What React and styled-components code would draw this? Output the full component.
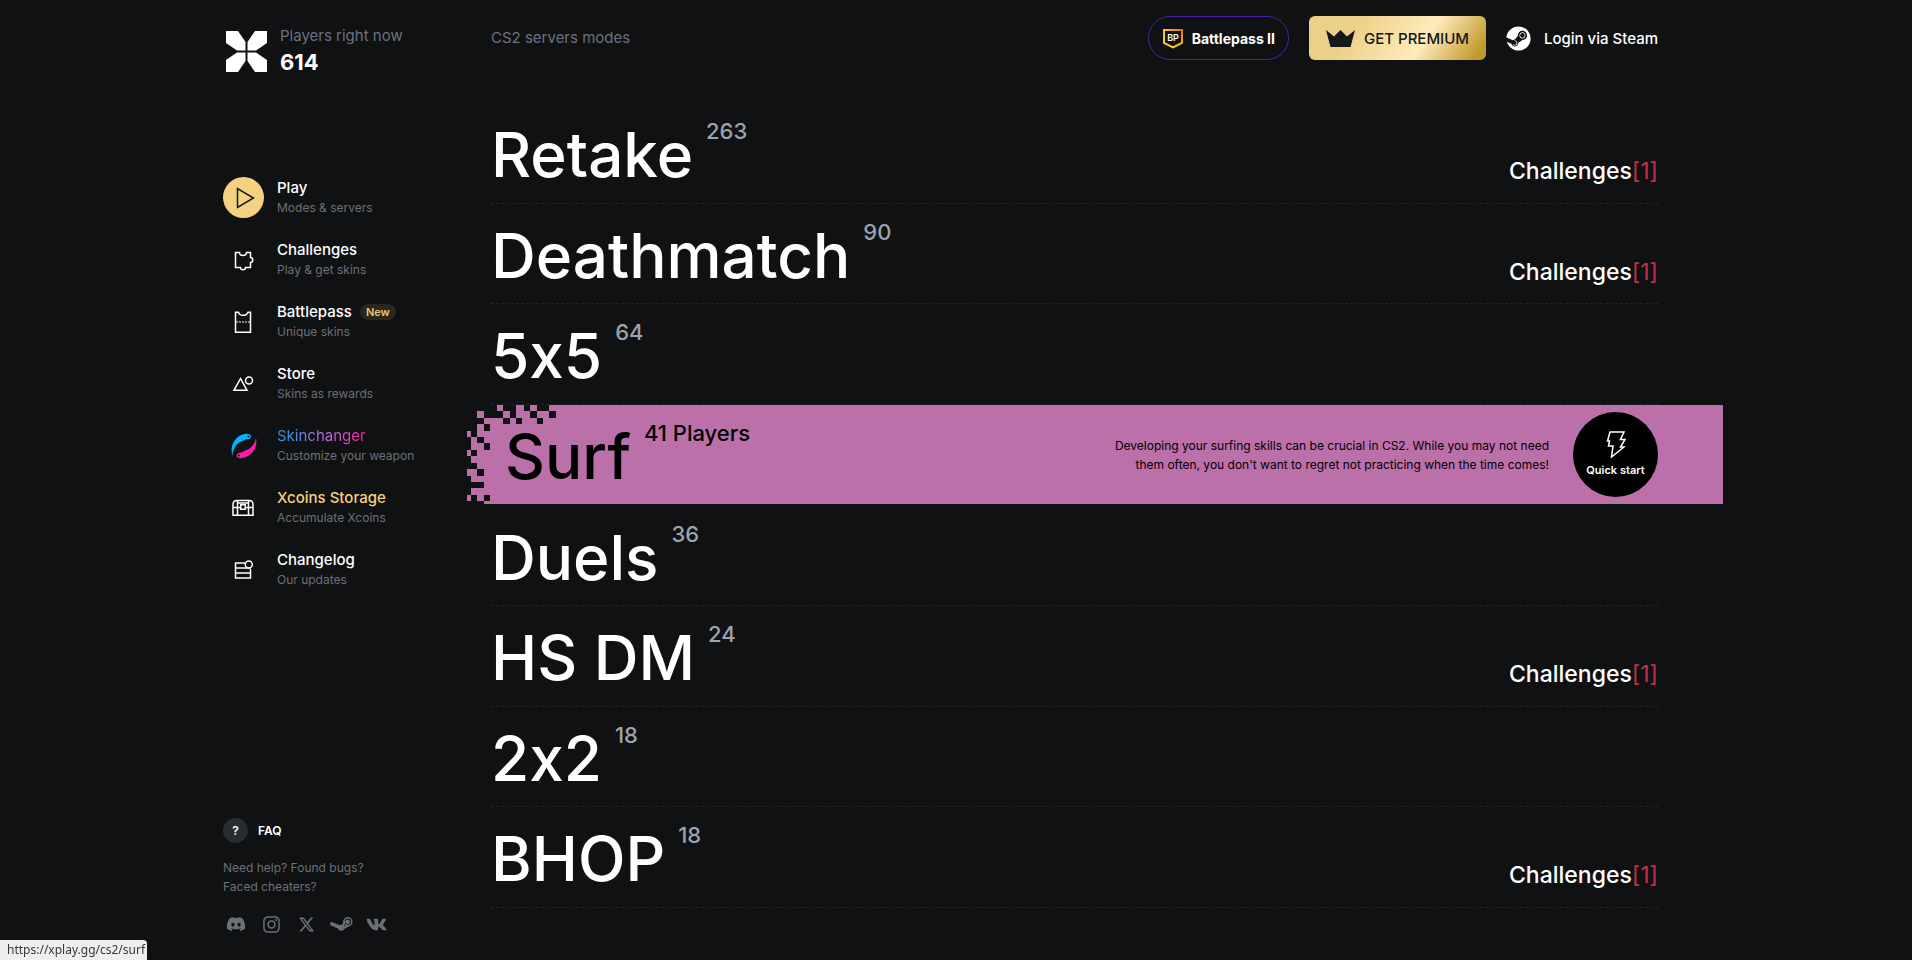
import React from "react";
import styled, { createGlobalStyle, css } from "styled-components";
import { FaDiscord, FaInstagram, FaXTwitter, FaSteam } from "react-icons/fa6";
import { FaVk } from "react-icons/fa";

const GlobalStyle = createGlobalStyle`
  *, *::before, *::after { box-sizing: border-box; }
  body {
    margin: 0;
    background: #101113;
    color: #fff;
    font-family: Inter, "Liberation Sans", sans-serif;
    font-variant-ligatures: no-contextual;
  }
  a { color: inherit; text-decoration: none; }
  h1, h2, p, ul { margin: 0; padding: 0; font-weight: inherit; }
  ul { list-style: none; }
  button { font: inherit; color: inherit; border: 0; padding: 0; cursor: pointer; }
`;

const Page = styled.div`
  display: flex;
  max-width: 1468px;
  min-height: 100vh;
  margin: 0 auto;
  padding: 0 32px 0 1px;
`;

const Sidebar = styled.aside`
  display: flex;
  flex-direction: column;
  flex: 0 0 268px;
  padding: 25px 0;
`;

const Brand = styled.a`
  display: flex;
  align-items: center;
  gap: 13px;
  padding-left: 3px;
`;

const Online = styled.div`
  font-size: 15px;
  line-height: 22px;
  color: #6b7280;
`;

const OnlineCount = styled.strong`
  display: block;
  font-size: 22px;
  line-height: 30px;
  font-weight: 700;
  color: #fff;
`;

const Nav = styled.nav`
  display: flex;
  flex-direction: column;
  gap: 21px;
  padding-top: 100px;
`;

const NavItem = styled.a`
  display: flex;
  gap: 13px;
`;

const NavIcon = styled.span`
  display: flex;
  align-items: center;
  justify-content: center;
  flex: none;
  width: 41px;
  height: 41px;
  border-radius: 50%;
  background: ${(p) => (p.$active ? "#f4d27f" : "transparent")};
`;

const NavText = styled.span`
  padding-top: 1px;
`;

const NavTitle = styled.span`
  display: flex;
  align-items: center;
  gap: 8px;
  font-size: 15px;
  line-height: 20px;
  font-weight: 500;
  color: ${(p) => (p.$tone === "gold" ? "#f4d27f" : "#fff")};
`;

const NavLabel = styled.span`
  ${(p) =>
    p.$tone === "rainbow" &&
    css`
      font-weight: 400;
      color: transparent;
      background: linear-gradient(90deg, #1d9bdb, #b86fe0 55%, #ff1fa0);
      background-clip: text;
    `}
`;

const NavHint = styled.span`
  display: block;
  font-size: 12px;
  line-height: 19px;
  color: #6b7077;
`;

const Badge = styled.span`
  padding: 0 6px;
  border-radius: 8px;
  background: #2b271f;
  color: #e9c873;
  font-size: 11px;
  line-height: 16px;
  font-weight: 600;
`;

const SidebarFoot = styled.footer`
  margin-top: auto;
  color: #6b7077;
  font-size: 12px;
  line-height: 19px;
`;

const Faq = styled.a`
  display: flex;
  align-items: center;
  gap: 10px;
  margin-bottom: 15px;
  color: #fff;
  font-weight: 600;
`;

const FaqMark = styled.span`
  width: 25px;
  height: 25px;
  border-radius: 50%;
  background: #282c31;
  line-height: 25px;
  text-align: center;
`;

const Socials = styled.div`
  display: flex;
  align-items: center;
  gap: 15px;
  height: 22px;
  margin-top: 17px;
  padding-left: 3px;
  a { display: flex; justify-content: center; width: 20px; }
  svg { flex: none; }
`;

const Main = styled.main`
  display: flex;
  flex-direction: column;
  flex: 1;
  min-width: 0;
  padding-bottom: 52px;
`;

const TopBar = styled.header`
  display: flex;
  align-items: center;
  gap: 20px;
  height: 103px;
  padding: 16px 0 43px;
`;

const PageTitle = styled.h1`
  margin-right: auto;
  font-size: 15px;
  line-height: 24px;
  color: #6b7280;
`;

const PassButton = styled.a`
  display: flex;
  align-items: center;
  gap: 8px;
  height: 44px;
  padding: 0 13px;
  border: 1px solid #4a21a8;
  border-radius: 22px;
  font-size: 14px;
  font-weight: 700;
`;

const PremiumButton = styled.button`
  display: flex;
  align-items: center;
  gap: 9px;
  height: 44px;
  padding: 0 17px;
  border-radius: 6px;
  background: linear-gradient(125deg, #ecd087 0%, #ecd087 25%, #ffebbd 64%, #c19a2c 94%);
  color: #16171a;
  font-size: 15px;
  font-weight: 500;
`;

const LoginLink = styled.a`
  display: flex;
  align-items: center;
  gap: 13px;
  font-size: 15px;
  font-weight: 500;
`;

const ModeList = styled.ul`
  display: grid;
  flex: 1;
  grid-auto-rows: 1fr;
`;

const Mode = styled.li`
  display: flex;
  align-items: flex-start;
  justify-content: space-between;
  border-bottom: 1px dashed #222427;
`;

const ModeLink = styled.a`
  display: flex;
  gap: 13px;
`;

const ModeName = styled.h2`
  padding-top: 14px;
  font-size: 62px;
  line-height: 76px;
  font-weight: 500;
`;

const ModeCount = styled.span`
  padding-top: 14px;
  font-size: 22px;
  line-height: 28px;
  font-weight: 500;
  color: ${(p) => (p.$dark ? "#000" : "#9ca3af")};
`;

const ChallengeLink = styled.a`
  padding-top: 54px;
  font-size: 23px;
  line-height: 28px;
  font-weight: 500;
  span { color: #c0304a; font-weight: 400; }
`;

const Featured = styled.li`
  position: relative;
  display: flex;
  justify-content: space-between;
  margin: 0 -65px 2px -24px;
  padding: 0 65px 0 38px;
  background: #bb70aa;
  color: #000;
`;

const Pixels = styled.svg`
  position: absolute;
  top: 0;
  left: 0;
`;

const Pitch = styled.div`
  display: flex;
  align-items: center;
  gap: 24px;
  padding-top: 1px;
`;

const PitchText = styled.p`
  max-width: 448px;
  font-size: 12px;
  line-height: 19px;
  text-align: right;
`;

const QuickStart = styled.button`
  display: flex;
  flex-direction: column;
  align-items: center;
  justify-content: center;
  gap: 4px;
  width: 85px;
  height: 85px;
  border-radius: 50%;
  background: #000;
  color: #fff;
  font-size: 11px;
  line-height: 16px;
  font-weight: 600;
`;

const StatusUrl = styled.div`
  position: fixed;
  left: 0;
  bottom: 0;
  padding: 0 2px 0 7px;
  border-radius: 0 4px 0 0;
  background: #eeeeee;
  color: #333940;
  font-family: "Noto Sans", sans-serif;
  font-size: 12px;
  line-height: 20px;
`;

const LogoMark = () => (
  <svg width="41" height="41" viewBox="0 0 41 41" fill="#fff" aria-hidden="true">
    <path d="M0 0h12l7.500 11v8.500H11L0 12z" />
    <path d="M41 0H29l-7.500 11v8.500H30l11-7.500z" />
    <path d="M0 41h12l7.500-11v-8.500H11L0 29z" />
    <path d="M41 41H29l-7.500-11v-8.500H30L41 29z" />
  </svg>
);

const Line = ({ color = "#fff", children }) => (
  <svg width="26" height="26" viewBox="1 0 26 26" fill="none" stroke={color} strokeWidth="1.5" aria-hidden="true">
    {children}
  </svg>
);

const icons = {
  play: (
    <Line color="#16171a">
      <path d="M7.500 3.500v19L23.500 13z" />
    </Line>
  ),
  puzzle: (
    <Line>
      <path d="M5.500 5.500h4c0 4 7 4 7 0h4v5c3 0 3 5 0 5v5h-5c0 3-5 3-5 0h-5z" />
    </Line>
  ),
  ticket: (
    <Line>
      <path d="M5.500 3.200h3c1 4.200 8 4.200 9.500 0h2.500v20h-15z" />
      <path d="M6 13h14" strokeDasharray="2 1" strokeWidth="1" />
    </Line>
  ),
  shapes: (
    <Line>
      <path d="M10.500 7.500 4 19.300h13z" />
      <circle cx="19" cy="9.500" r="3.500" />
    </Line>
  ),
  knives: (
    <svg width="26" height="26" viewBox="0 0 26 26" aria-hidden="true">
      <path d="M1.500 23C-1.500 14 3 4.500 11.500 1.500c3.500-1.400 8-1.200 8.500 1.500-.2 3-2.500 3.600-4.500 3-1.500.2-1.500 1.700-4 2C6 9.500 2 15 1.500 23z" fill="#00b2ff" />
      <circle cx="17.500" cy="3.500" r="1" fill="#101113" />
      <path d="M25 4.500c1.500 9-2 16-10 19.500-3 1.200-8 2-9.500-.5 0-3 2.500-4.500 5-4 1.500-.2 1.500-1.700 4-2C19 16 24 12 25 4.500z" fill="#ff1aa5" />
      <circle cx="8" cy="22.500" r="1" fill="#101113" />
    </svg>
  ),
  chest: (
    <Line>
      <path d="M3 20.300h20V9.500c0-2.500-1.500-4-4-4H7c-2.500 0-4 1.500-4 4zM3 12.500h7m6 0h7M7.500 5.500v15m11-15v15" />
      <path d="M10.700 9.700h4.600v4.600h-4.600zM7.500 8h11" />
    </Line>
  ),
  log: (
    <Line>
      <path d="M15 6H5.500v15h15v-9M5.500 11h15M5.500 16h15" />
      <circle cx="18.800" cy="7.500" r="3.500" />
    </Line>
  ),
};

const SteamArm = () => (
  <svg width="24" height="14" viewBox="0 0 24 14" fill="none" stroke="currentColor" aria-hidden="true">
    <circle cx="18.800" cy="4.800" r="4" strokeWidth="1.500" />
    <circle cx="18.800" cy="4.800" r="2.200" fill="currentColor" stroke="none" />
    <path d="M2.800 6.800l9.500 4.200" strokeWidth="3.600" strokeLinecap="round" />
    <circle cx="12.300" cy="10.700" r="2.300" strokeWidth="1.500" />
    <path d="M13 9.500l3.500-5.500M14 11.500l5.500-3.500" strokeWidth="2.200" />
  </svg>
);

const navItems = [
  { icon: "play", title: "Play", hint: "Modes & servers", active: true },
  { icon: "puzzle", title: "Challenges", hint: "Play & get skins" },
  { icon: "ticket", title: "Battlepass", hint: "Unique skins", badge: "New" },
  { icon: "shapes", title: "Store", hint: "Skins as rewards" },
  { icon: "knives", title: "Skinchanger", hint: "Customize your weapon", tone: "rainbow" },
  { icon: "chest", title: "Xcoins Storage", hint: "Accumulate Xcoins", tone: "gold" },
  { icon: "log", title: "Changelog", hint: "Our updates" },
];

const socials = [
  { name: "Discord", Icon: FaDiscord, size: 20 },
  { name: "Instagram", Icon: FaInstagram, size: 19 },
  { name: "X", Icon: FaXTwitter, size: 17 },
  { name: "Steam", Icon: SteamArm },
  { name: "VK", Icon: FaVk, size: 21 },
];

const modes = [
  { name: "Retake", players: 263, challenges: 1 },
  { name: "Deathmatch", players: 90, challenges: 1 },
  { name: "5x5", players: 64 },
  {
    name: "Surf",
    players: 41,
    pitch:
      "Developing your surfing skills can be crucial in CS2. While you may not need them often, you don't want to regret not practicing when the time comes!",
  },
  { name: "Duels", players: 36 },
  { name: "HS DM", players: 24, challenges: 1 },
  { name: "2x2", players: 18 },
  { name: "BHOP", players: 18, challenges: 1 },
];

// Each row: top, bottom, then [from, to] spans left uncoloured at the banner's ragged corner.
const pixelRows = [
  [0, 6, [0, 30], [36, 49], [57, 63], [70, 82]],
  [6, 13, [0, 10], [17, 36], [43, 49], [63, 70], [82, 89]],
  [13, 19, [0, 17], [36, 43], [49, 55], [70, 76]],
  [19, 26, [0, 10], [17, 23]],
  [26, 32, [4, 10]],
  [32, 38, [0, 4], [10, 17]],
  [38, 45, [0, 4], [17, 23]],
  [45, 51, [4, 10]],
  [51, 58, [0, 4]],
  [58, 64, [0, 10]],
  [64, 71, [10, 17]],
  [71, 77, [0, 4]],
  [77, 83, [0, 17]],
  [83, 90, [0, 4]],
  [90, 96, [4, 10], [17, 23]],
  [96, 99, [0, 17]],
];

const FeaturedMode = ({ mode }) => (
  <Featured>
    <Pixels width="89" height="99" fill="#101113" shapeRendering="crispEdges" aria-hidden="true">
      {pixelRows.map(([top, bottom, ...spans]) =>
        spans.map(([from, to]) => (
          <rect key={`${top}-${from}`} x={from} y={top} width={to - from} height={bottom - top} />
        ))
      )}
    </Pixels>
    <ModeLink href="#surf">
      <ModeName>{mode.name}</ModeName>
      <ModeCount $dark>{mode.players} Players</ModeCount>
    </ModeLink>
    <Pitch>
      <PitchText>{mode.pitch}</PitchText>
      <QuickStart type="button">
        <svg width="20" height="27" viewBox="0 0 20 27" fill="none" stroke="#fff" strokeWidth="1.500" aria-hidden="true">
          <path d="M4 1h14l-3.500 7.500H19L14.500 16H18L5.500 26l1.500-11H2.500l1-5H1.500z" />
        </svg>
        Quick start
      </QuickStart>
    </Pitch>
  </Featured>
);

export default function App() {
  return (
    <>
      <GlobalStyle />
      <Page>
        <Sidebar>
          <Brand href="#home">
            <LogoMark />
            <Online>
              Players right now
              <OnlineCount>614</OnlineCount>
            </Online>
          </Brand>
          <Nav>
            {navItems.map((item) => (
              <NavItem key={item.title} href={`#${item.icon}`}>
                <NavIcon $active={item.active}>{icons[item.icon]}</NavIcon>
                <NavText>
                  <NavTitle $tone={item.tone}>
                    <NavLabel $tone={item.tone}>{item.title}</NavLabel>
                    {item.badge && <Badge>{item.badge}</Badge>}
                  </NavTitle>
                  <NavHint>{item.hint}</NavHint>
                </NavText>
              </NavItem>
            ))}
          </Nav>
          <SidebarFoot>
            <Faq href="#faq">
              <FaqMark>?</FaqMark>
              FAQ
            </Faq>
            <p>
              Need help? Found bugs?
              <br />
              Faced cheaters?
            </p>
            <Socials>
              {socials.map(({ name, Icon, size }) => (
                <a key={name} href={`#${name}`} aria-label={name}>
                  <Icon size={size} />
                </a>
              ))}
            </Socials>
          </SidebarFoot>
        </Sidebar>
        <Main>
          <TopBar>
            <PageTitle>CS2 servers modes</PageTitle>
            <PassButton href="#battlepass">
              <svg width="22" height="22" viewBox="0 0 22 22" aria-hidden="true">
                <defs>
                  <linearGradient id="shield" x1="0" y1="1" x2="1" y2="0">
                    <stop offset="0" stopColor="#ffd21f" />
                    <stop offset="0.500" stopColor="#ffc02a" />
                    <stop offset="1" stopColor="#d9781c" />
                  </linearGradient>
                </defs>
                <path d="M2 3h18v13l-9 4.500L2 16z" fill="#101113" stroke="url(#shield)" strokeWidth="2" />
                <text x="11" y="14" fill="#fff" fontSize="9" fontWeight="600" textAnchor="middle">
                  BP
                </text>
              </svg>
              Battlepass II
            </PassButton>
            <PremiumButton type="button">
              <svg width="29" height="17" viewBox="0 0 29 17" fill="#16171a" aria-hidden="true">
                <path d="M0 0l8 6.500L14.500 0 21 6.500 29 0l-4.500 17h-20z" />
              </svg>
              GET PREMIUM
            </PremiumButton>
            <LoginLink href="#login">
              <FaSteam size={25} />
              Login via Steam
            </LoginLink>
          </TopBar>
          <ModeList>
            {modes.map((mode) =>
              mode.pitch ? (
                <FeaturedMode key={mode.name} mode={mode} />
              ) : (
                <Mode key={mode.name}>
                  <ModeLink href={`#${mode.name}`}>
                    <ModeName>{mode.name}</ModeName>
                    <ModeCount>{mode.players}</ModeCount>
                  </ModeLink>
                  {mode.challenges && (
                    <ChallengeLink href={`#${mode.name}-challenges`}>
                      Challenges<span>[{mode.challenges}]</span>
                    </ChallengeLink>
                  )}
                </Mode>
              )
            )}
          </ModeList>
        </Main>
      </Page>
      <StatusUrl>https://xplay.gg/cs2/surf</StatusUrl>
    </>
  );
}
